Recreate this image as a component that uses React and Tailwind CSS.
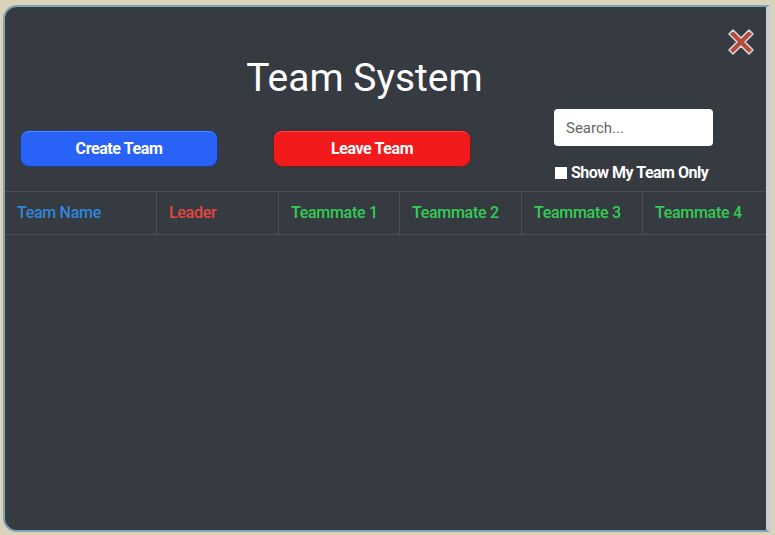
export default function App() {
  const cols = [
    { label: "Team Name", w: "w-[152px]", c: "text-[#2f86dc]" },
    { label: "Leader", w: "w-[122px]", c: "text-[#e5473e]" },
    { label: "Teammate 1", w: "w-[121px]", c: "text-[#33cc55]" },
    { label: "Teammate 2", w: "w-[122px]", c: "text-[#33cc55]" },
    { label: "Teammate 3", w: "w-[121px]", c: "text-[#33cc55]" },
    { label: "Teammate 4", w: "flex-1", c: "text-[#33cc55]" },
  ];
  return (
    <div
      className="w-[775px] h-[535px] bg-[#d9d3bb] pl-[3px] pt-[5px]"
      style={{ fontFamily: "Roboto, 'Liberation Sans', sans-serif" }}
    >
      <div className="w-[768px] h-[527px] rounded-l-[14px] rounded-r-[3px] border-2 border-[#7fa2b6] border-r-[5px] border-r-[#c9ced3] bg-[#363a41] flex flex-col overflow-hidden">
        <div className="relative h-[184px] shrink-0">
          <button className="absolute right-[10px] top-[20px] w-[30px] h-[30px]">
            <svg viewBox="0 0 30 30" width="30" height="30">
              <path
                d="M3 7 L7 3 L15 11 L23 3 L27 7 L19 15 L27 23 L23 27 L15 19 L7 27 L3 23 L11 15 Z"
                fill="#b34a3c"
                stroke="#d8d8d8"
                strokeWidth="1.6"
                strokeLinejoin="round"
              />
            </svg>
          </button>
          <div className="pt-[49px] h-[97px] text-center pr-[42px] text-white text-[39px] leading-[44px]">
            Team System
          </div>
          <div className="flex items-start pl-[15px]">
            <button className="mt-[26px] w-[198px] h-[37px] rounded-[9px] bg-[#2862f6] border border-[#1b3d8a] shadow-[inset_0_1px_0_rgba(255,255,255,0.25)] text-white font-bold text-[16px] tracking-[-0.4px]">
              Create Team
            </button>
            <button className="mt-[26px] ml-[55px] w-[198px] h-[37px] rounded-[9px] bg-[#f21a1a] border border-[#6b2020] shadow-[inset_0_1px_0_rgba(255,255,255,0.25)] text-white font-bold text-[16px] tracking-[-0.4px]">
              Leave Team
            </button>
            <div className="ml-[83px] mt-[5px] flex flex-col">
              <input
                placeholder="Search..."
                className="w-[159px] h-[37px] rounded-[4px] bg-white px-[12px] text-[15px] text-[#333] placeholder:text-[#666] outline-none"
              />
              <label className="mt-[18px] flex items-center text-white font-bold text-[16px] tracking-[-0.5px] leading-[18px]">
                <span className="w-[12px] h-[12px] bg-white mr-[4px] ml-[1px]" />
                Show My Team Only
              </label>
            </div>
          </div>
        </div>
        <div className="flex h-[44px] border-y border-[#4b5058] shrink-0">
          {cols.map((col, i) => (
            <div
              key={col.label}
              className={`${col.w} ${col.c} ${i < cols.length - 1 ? "border-r border-[#4b5058]" : ""} flex items-center pl-[12px] text-[16px] font-medium tracking-[-0.3px]`}
            >
              {col.label}
            </div>
          ))}
        </div>
        <div className="flex-1" />
      </div>
    </div>
  );
}
